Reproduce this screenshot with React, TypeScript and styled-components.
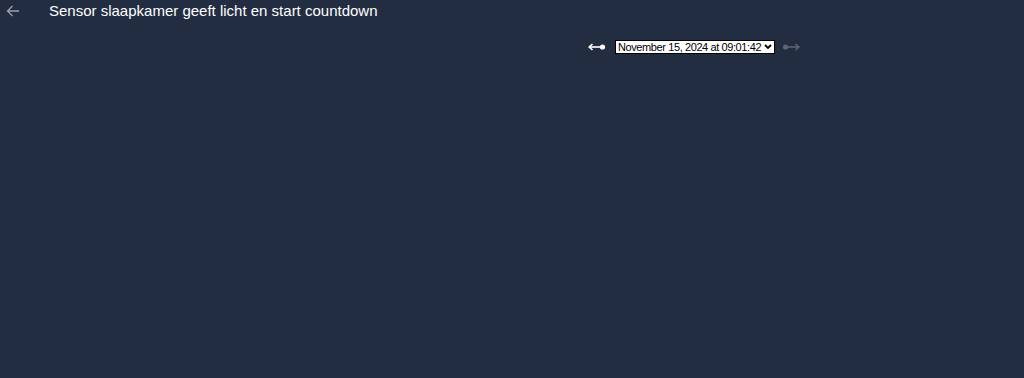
import styled, { createGlobalStyle } from "styled-components";

const GlobalStyle = createGlobalStyle`
  html, body {
    margin: 0;
    padding: 0;
    background: #222d42;
    height: 100%;
  }
  body {
    font-family: "Liberation Sans", Arial, sans-serif;
  }
`;

const Page = styled.div`
  width: 1024px;
  height: 378px;
  background: #222d42;
  color: #fff;
`;

const Header = styled.header`
  display: flex;
  align-items: center;
  height: 22px;
`;

const BackButton = styled.button`
  display: flex;
  align-items: center;
  justify-content: center;
  width: 26px;
  height: 22px;
  padding: 0;
  border: none;
  background: transparent;
  color: #9aa1ad;
  cursor: pointer;
`;

const Title = styled.h1`
  margin: 0 0 0 23px;
  font-size: 15px;
  font-weight: normal;
  line-height: 22px;
  color: #fff;
`;

const Toolbar = styled.div`
  display: flex;
  align-items: center;
  gap: 7px;
  margin: 18px 0 0 586px;
`;

const StepButton = styled.button<{ $disabled?: boolean }>`
  display: flex;
  align-items: center;
  justify-content: ${(p) => (p.$disabled ? "flex-start" : "center")};
  width: 22px;
  height: 14px;
  padding: 0;
  border: none;
  background: transparent;
  color: ${(p) => (p.$disabled ? "#5d6472" : "#ffffff")};
`;

const SelectWrap = styled.div`
  position: relative;
  display: flex;
`;

const TimeSelect = styled.select`
  appearance: none;
  -webkit-appearance: none;
  box-sizing: border-box;
  height: 14px;
  width: 160px;
  padding: 0 12px 0 2px;
  margin: 0;
  border: 1px solid #000;
  border-radius: 0;
  background: #fff;
  color: #000;
  font-family: "Liberation Sans", Arial, sans-serif;
  font-size: 11px;
  letter-spacing: -0.4px;
  line-height: 12px;
`;

const Chevron = styled.svg`
  position: absolute;
  right: 3px;
  top: 4px;
  pointer-events: none;
`;

const BackIcon = () => (
  <svg width="14" height="12" viewBox="0 0 14 12" fill="none">
    <path d="M13 6H1.5M6.5 1L1.5 6l5 5" stroke="currentColor" strokeWidth="1.3" />
  </svg>
);

const RayIcon = ({ flip }: { flip?: boolean }) => (
  <svg
    width="18"
    height="8"
    viewBox="0 0 18 8"
    fill="none"
    style={flip ? { transform: "scaleX(-1)" } : undefined}
  >
    <path d="M1.5 4H14" stroke="currentColor" strokeWidth="1.6" />
    <path d="M4.5 1L1.2 4l3.3 3" stroke="currentColor" strokeWidth="1.6" />
    <circle cx="14.5" cy="4" r="2.6" fill="currentColor" />
  </svg>
);

export default function App() {
  return (
    <Page>
      <GlobalStyle />
      <Header>
        <BackButton aria-label="Back">
          <BackIcon />
        </BackButton>
        <Title>Sensor slaapkamer geeft licht en start countdown</Title>
      </Header>
      <Toolbar>
        <StepButton aria-label="Previous">
          <RayIcon />
        </StepButton>
        <SelectWrap>
          <TimeSelect defaultValue="0">
            <option value="0">November 15, 2024 at 09:01:42</option>
          </TimeSelect>
          <Chevron width="8" height="6" viewBox="0 0 8 6" fill="none">
            <path d="M1 1l3 3 3-3" stroke="#000" strokeWidth="1.8" />
          </Chevron>
        </SelectWrap>
        <StepButton $disabled aria-label="Next">
          <RayIcon flip />
        </StepButton>
      </Toolbar>
    </Page>
  );
}
